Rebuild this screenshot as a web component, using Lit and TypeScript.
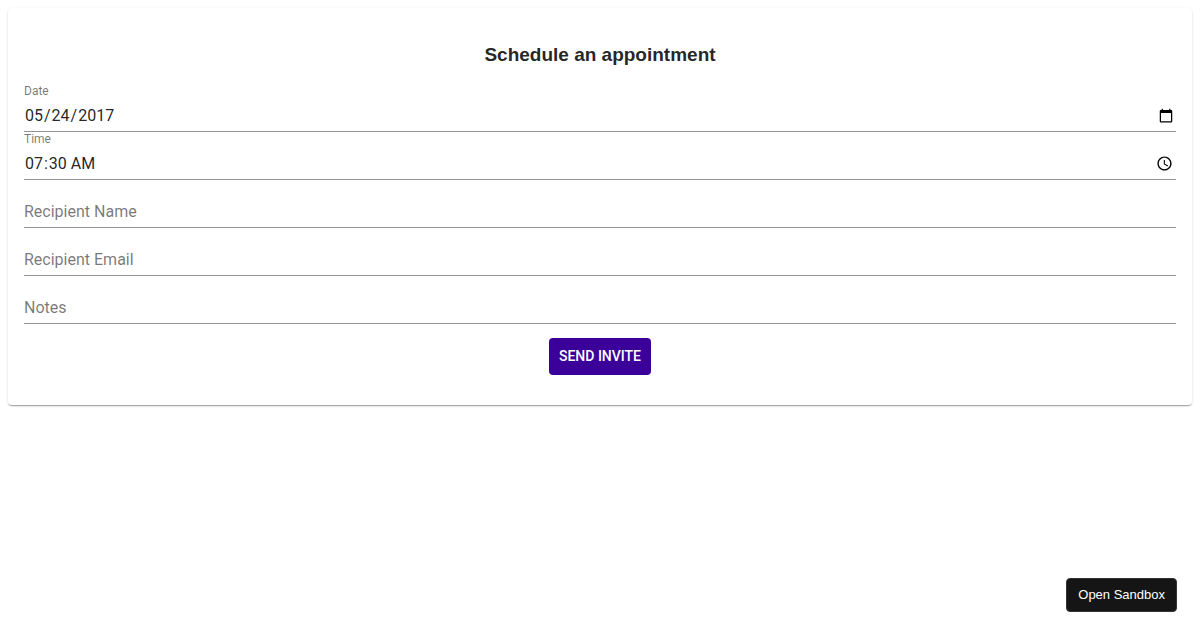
import { LitElement, html, css } from "lit";
import { customElement, property } from "lit/decorators.js";

@customElement("text-field")
class TextField extends LitElement {
  @property() label = "";
  @property() type = "text";
  @property() value = "";

  static styles = css`
    :host {
      display: block;
    }
    .field {
      position: relative;
      display: flex;
      flex-direction: column;
      padding-top: 16px;
      border-bottom: 1px solid #949494;
    }
    .label {
      position: absolute;
      top: 20px;
      left: 0;
      font-size: 16px;
      line-height: 24px;
      color: rgba(0, 0, 0, 0.54);
      pointer-events: none;
    }
    .filled .label,
    .field:focus-within .label {
      top: 0;
      font-size: 12px;
      line-height: 14px;
    }
    .input {
      box-sizing: border-box;
      width: 100%;
      height: 31px;
      margin: 0;
      padding: 6px 0;
      border: 0;
      outline: 0;
      background: none;
      color: rgba(0, 0, 0, 0.87);
      font: 16px Roboto, sans-serif;
    }
  `;

  render() {
    return html`
      <div class="field ${this.value ? "filled" : ""}">
        <label class="label" for="input">${this.label}</label>
        <input class="input" id="input" type=${this.type} .value=${this.value} />
      </div>
    `;
  }
}

@customElement("app-root")
class AppRoot extends LitElement {
  static styles = css`
    :host {
      display: block;
      padding: 8px;
      font-family: Roboto, sans-serif;
      color: rgba(0, 0, 0, 0.87);
    }
    .card {
      padding: 16px 16px 30px;
      border-radius: 4px;
      background: #fff;
      box-shadow:
        0 2px 1px -1px rgba(0, 0, 0, 0.2),
        0 1px 1px 0 rgba(0, 0, 0, 0.14),
        0 1px 3px 0 rgba(0, 0, 0, 0.12);
    }
    .form {
      display: flex;
      flex-direction: column;
    }
    .title {
      margin: 20px 0 18px;
      font: bold 19px/22px "Liberation Sans", sans-serif;
      text-align: center;
    }
    .send {
      align-self: center;
      margin-top: 14px;
      padding: 6px 10px;
      border: 0;
      border-radius: 4px;
      background: #3b0099;
      color: #fff;
      font: 500 14px/25px Roboto, sans-serif;
      text-transform: uppercase;
      cursor: pointer;
    }
    .sandbox {
      position: fixed;
      right: 23px;
      bottom: 18px;
      padding: 8px 11px;
      border: 1px solid #343434;
      border-radius: 4px;
      background: #151515;
      color: #fff;
      font: 13px/16px "Liberation Sans", sans-serif;
      cursor: pointer;
    }
  `;

  render() {
    return html`
      <main class="card">
        <form class="form" @submit=${(e: Event) => e.preventDefault()}>
          <h3 class="title">Schedule an appointment</h3>
          <text-field label="Date" type="date" value="2017-05-24"></text-field>
          <text-field label="Time" type="time" value="07:30"></text-field>
          <text-field label="Recipient Name"></text-field>
          <text-field label="Recipient Email"></text-field>
          <text-field label="Notes"></text-field>
          <button class="send" type="submit">Send Invite</button>
        </form>
      </main>
      <button class="sandbox" type="button">Open Sandbox</button>
    `;
  }
}
